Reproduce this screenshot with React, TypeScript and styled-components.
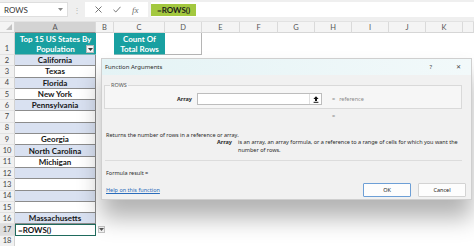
import React from 'react';
import styled, { createGlobalStyle } from 'styled-components';

const GlobalStyle = createGlobalStyle`
  html, body { margin: 0; padding: 0; background: #fff; }
  body { overflow: hidden; }
`;

const Page = styled.div`
  position: relative;
  width: 474px;
  height: 246px;
  overflow: hidden;
  background: #fff;
  font-family: Lato, "Liberation Sans", sans-serif;
`;

/* ---------- formula bar ---------- */

const TopBar = styled.div`
  display: flex;
  align-items: flex-start;
  height: 22px;
  padding-top: 2px;
  box-sizing: border-box;
  background: #efefef;
  border-bottom: 1px solid #e2e2e2;
`;

const NameBox = styled.div`
  width: 68px;
  height: 15px;
  box-sizing: border-box;
  display: flex;
  align-items: center;
  justify-content: space-between;
  padding: 0 4px 0 4px;
  background: #fff;
  border: 1px solid #dedede;
  border-left: none;
  font-size: 8px;
  color: #333;
`;

const Dots = styled.div`
  width: 17px;
  height: 15px;
  display: flex;
  align-items: center;
  justify-content: center;
  color: #b5b5b5;
  font-size: 8px;
`;

const IconBox = styled.div`
  width: 63px;
  height: 15px;
  display: flex;
  align-items: center;
  justify-content: space-around;
  padding: 0 4px;
  box-sizing: border-box;
  background: #fff;
`;

const FxGlyph = styled.span`
  font-family: "Liberation Serif", serif;
  font-style: italic;
  font-size: 9px;
  color: #6c6c6c;
`;

const FormulaField = styled.div`
  flex: 1;
  height: 15px;
  margin-left: 3px;
  background: #fff;
  display: flex;
  align-items: center;
`;

const Highlight = styled.span`
  display: flex;
  align-items: center;
  height: 12px;
  padding: 0 6px 0 6px;
  background: #a3c83f;
  color: #1d1d1d;
  font-size: 8px;
  font-weight: 700;
`;

/* ---------- sheet ---------- */

const Sheet = styled.div`
  display: grid;
  grid-template-columns: 15px 81px 18px 51px 37px 38px 38px 37px 37px 37px 37px 37px 1fr;
  grid-template-rows: 11px 22px repeat(17, 11.3px);
`;

const Corner = styled.div`
  background: #f4f4f4;
  border-right: 1px solid #d6d6d6;
  border-bottom: 1px solid #d6d6d6;
  display: flex;
  align-items: flex-end;
  justify-content: flex-end;
  padding: 0 2px 2px 0;
`;

const ColHead = styled.div<{ $selected?: boolean }>`
  background: ${({ $selected }) => ($selected ? '#d3d3d3' : '#f4f4f4')};
  border-right: 1px solid #dadada;
  border-bottom: 1px solid ${({ $selected }) => ($selected ? '#8a8a8a' : '#d6d6d6')};
  color: #555;
  font-size: 7.5px;
  display: flex;
  align-items: center;
  justify-content: center;
`;

const RowNum = styled.div<{ $selected?: boolean; $tall?: boolean }>`
  background: ${({ $selected }) => ($selected ? '#dedede' : '#f1f1f1')};
  border-right: 1px solid #d2d2d2;
  border-bottom: 1px solid #e2e2e2;
  color: #444;
  font-size: 7.5px;
  display: flex;
  align-items: ${({ $tall }) => ($tall ? 'flex-end' : 'center')};
  justify-content: center;
  padding-bottom: ${({ $tall }) => ($tall ? '1px' : '0')};
  box-sizing: border-box;
`;

const TealCell = styled.div`
  position: relative;
  background: #19a0a1;
  color: #fff;
  font-weight: 700;
  font-size: 8px;
  line-height: 10px;
  display: flex;
  align-items: center;
  justify-content: center;
  text-align: center;
  border-bottom: 1px solid #7fb8b8;
`;

const FilterButton = styled.div`
  position: absolute;
  right: 2px;
  bottom: 1px;
  width: 8px;
  height: 8px;
  box-sizing: border-box;
  background: #f4f4f4;
  border: 1px solid #b8b8b8;
  display: flex;
  align-items: center;
  justify-content: center;
`;

const DataCell = styled.div<{ $fill?: boolean }>`
  background: ${({ $fill }) => ($fill ? '#d9e1f1' : '#fff')};
  border-right: 1px solid #8c8c8c;
  border-bottom: 1px solid #8c8c8c;
  box-sizing: border-box;
  color: #161616;
  font-size: 8px;
  font-weight: 700;
  display: flex;
  align-items: center;
  justify-content: center;
`;

const ActiveCell = styled.div`
  position: relative;
  border: 1.5px solid #1f6b5d;
  box-sizing: border-box;
  color: #111;
  font-size: 8px;
  font-weight: 700;
  display: flex;
  align-items: center;
  padding-left: 2px;
`;

const EdgeCell = styled.div<{ $right?: boolean; $bottom?: boolean }>`
  border-right: ${({ $right }) => ($right ? '1px solid #b5b5b5' : 'none')};
  border-bottom: ${({ $bottom }) => ($bottom ? '1px solid #b5b5b5' : 'none')};
`;

const Empty = styled.div``;

const AutoButton = styled.div`
  width: 7px;
  height: 7px;
  margin: 2px 0 0 2px;
  box-sizing: border-box;
  background: #f4f4f4;
  border: 1px solid #c4c4c4;
  display: flex;
  align-items: center;
  justify-content: center;
`;

/* ---------- dialog ---------- */

const Dialog = styled.div`
  position: absolute;
  left: 101px;
  top: 58px;
  width: 371px;
  height: 142px;
  box-sizing: border-box;
  background: #f1f1f1;
  border: 1px solid #cfcfcf;
  box-shadow: 0 18px 22px 0 rgba(0, 0, 0, 0.3);
  font-family: "Noto Sans", "Open Sans", sans-serif;
  color: #2b2b2b;
  display: flex;
  flex-direction: column;
`;

const TitleBar = styled.div`
  height: 16px;
  flex-shrink: 0;
  display: flex;
  align-items: center;
  justify-content: space-between;
  padding: 0 10px 0 3px;
  background: linear-gradient(90deg, #e4f3f5, #f2f9fa);
  font-size: 6px;
`;

const TitleButtons = styled.div`
  display: flex;
  align-items: center;
  gap: 24px;
  font-size: 6px;
  color: #444;
`;

const Body = styled.div`
  flex: 1;
  display: flex;
  flex-direction: column;
  padding: 0 5px 3px 2px;
  font-size: 5.5px;
`;

const GroupBox = styled.fieldset`
  margin: 6px 4px 0 0;
  padding: 4px 0 3px 0;
  min-width: 0;
  border: 1px solid #d9d9d9;
  background: #f6f6f6;
`;

const Legend = styled.legend`
  margin-left: 5px;
  padding: 0 1px;
  line-height: 8px;
  font-size: 5.5px;
  color: #555;
`;

const ArgRow = styled.div`
  display: grid;
  grid-template-columns: 87px 125px auto;
  column-gap: 5px;
  align-items: center;
  height: 12px;
`;

const ArgLabel = styled.div`
  text-align: right;
  font-weight: 700;
`;

const ArgInput = styled.div`
  height: 12px;
  box-sizing: border-box;
  background: #fff;
  border: 1px solid #bdbdbd;
  display: flex;
  justify-content: flex-end;
`;

const RefButton = styled.div`
  width: 11px;
  height: 10px;
  display: flex;
  align-items: center;
  justify-content: center;
  border-left: 1px solid #e0e0e0;
`;

const ArgValue = styled.div`
  padding-left: 5px;
  color: #8a8a8a;
  display: flex;
  gap: 4px;
`;

const EqRow = styled(ArgRow)`
  margin: 1px 0 0 1px;
`;

const Description = styled.div`
  margin: 9.5px 0 0 2px;
  line-height: 7.5px;
`;

const ArgHelp = styled.div`
  display: grid;
  grid-template-columns: 128px 1fr;
  column-gap: 6px;
  line-height: 7.5px;
`;

const ArgHelpLabel = styled.div`
  text-align: right;
  font-weight: 700;
`;

const Divider = styled.div`
  height: 1px;
  flex-shrink: 0;
  margin: 6px 4px 0 1px;
  background: #dcdcdc;
`;

const ResultRow = styled.div`
  margin: 8px 0 0 2px;
  line-height: 8px;
`;

const Footer = styled.div`
  margin-top: 6px;
  display: flex;
  align-items: center;
  justify-content: space-between;
`;

const HelpLink = styled.a`
  margin-left: 2px;
  color: #2a6cbb;
  text-decoration: underline;
`;

const ButtonRow = styled.div`
  display: flex;
  gap: 7px;
`;

const DialogButton = styled.button<{ $primary?: boolean }>`
  width: 48px;
  height: 14px;
  padding: 0;
  box-sizing: border-box;
  font-family: inherit;
  font-size: 5.5px;
  color: #222;
  background: #fdfdfd;
  border: 1px solid ${({ $primary }) => ($primary ? '#6d9fd6' : '#d3d3d3')};
  border-radius: 1px;
`;

/* ---------- icons ---------- */

const Caret = ({ color = '#777' }: { color?: string }) => (
  <svg width="5" height="3" viewBox="0 0 5 3">
    <path d="M0 0 L5 0 L2.5 3 Z" fill={color} />
  </svg>
);

const CrossIcon = () => (
  <svg width="7" height="7" viewBox="0 0 7 7">
    <path d="M0.5 0.5 L6.5 6.5 M6.5 0.5 L0.5 6.5" stroke="#666" strokeWidth="0.9" />
  </svg>
);

const CheckIcon = () => (
  <svg width="8" height="7" viewBox="0 0 8 7">
    <path d="M0.5 3.8 L2.8 6 L7.5 0.8" stroke="#666" strokeWidth="0.9" fill="none" />
  </svg>
);

const RefIcon = () => (
  <svg width="6" height="7" viewBox="0 0 6 7">
    <path d="M3 0.3 L5.6 3 L4 3 L4 5 L2 5 L2 3 L0.4 3 Z" fill="#111" />
    <rect x="0.6" y="5.8" width="4.8" height="1" fill="#111" />
  </svg>
);

const CornerTriangle = () => (
  <svg width="6" height="6" viewBox="0 0 6 6">
    <path d="M6 0 L6 6 L0 6 Z" fill="#c3c3c3" />
  </svg>
);

const COLS = ['A', 'B', 'C', 'D', 'E', 'F', 'G', 'H', 'I', 'J', 'K', ''];

const STATES = [
  'California', 'Texas', 'Florida', 'New York', 'Pennsylvania', '', '', 'Georgia',
  'North Carolina', 'Michigan', '', '', '', '', 'Massachusetts',
];

function restOfRow(row: number) {
  return COLS.slice(1).map((c, i) => <Empty key={row + '-' + i} />);
}

export default function App() {
  return (
    <Page>
      <GlobalStyle />
      <TopBar>
        <NameBox>
          ROWS
          <Caret color="#8a8a8a" />
        </NameBox>
        <Dots>⋮</Dots>
        <IconBox>
          <CrossIcon />
          <CheckIcon />
          <FxGlyph>fx</FxGlyph>
        </IconBox>
        <FormulaField>
          <Highlight>=ROWS()</Highlight>
        </FormulaField>
      </TopBar>

      <Sheet>
        <Corner>
          <CornerTriangle />
        </Corner>
        {COLS.map((c, i) => (
          <ColHead key={'h' + i} $selected={c === 'A'}>{c}</ColHead>
        ))}

        <RowNum $tall>1</RowNum>
        <TealCell>
          Top 15 US States By
          <br />
          Population
          <FilterButton>
            <Caret color="#333" />
          </FilterButton>
        </TealCell>
        <Empty />
        <TealCell>
          Count Of
          <br />
          Total Rows
        </TealCell>
        <EdgeCell $right $bottom />
        {COLS.slice(4).map((c, i) => <Empty key={'r1-' + i} />)}

        {STATES.map((name, i) => (
          <React.Fragment key={'row' + i}>
            <RowNum>{i + 2}</RowNum>
            <DataCell $fill={i % 2 === 0}>{name}</DataCell>
            {restOfRow(i + 2)}
          </React.Fragment>
        ))}

        <RowNum $selected>17</RowNum>
        <ActiveCell>=ROWS()</ActiveCell>
        <Empty>
          <AutoButton>
            <Caret color="#555" />
          </AutoButton>
        </Empty>
        {COLS.slice(2).map((c, i) => <Empty key={'r17-' + i} />)}

        <RowNum>18</RowNum>
        <Empty />
        {restOfRow(18)}
      </Sheet>

      <Dialog>
        <TitleBar>
          <span>Function Arguments</span>
          <TitleButtons>
            <span>?</span>
            <span>✕</span>
          </TitleButtons>
        </TitleBar>
        <Body>
          <GroupBox>
            <Legend>ROWS</Legend>
            <ArgRow>
              <ArgLabel>Array</ArgLabel>
              <ArgInput>
                <RefButton>
                  <RefIcon />
                </RefButton>
              </ArgInput>
              <ArgValue>
                <span>=</span>
                <span>reference</span>
              </ArgValue>
            </ArgRow>
          </GroupBox>
          <EqRow>
            <span />
            <span />
            <ArgValue>=</ArgValue>
          </EqRow>
          <Description>Returns the number of rows in a reference or array.</Description>
          <ArgHelp>
            <ArgHelpLabel>Array</ArgHelpLabel>
            <div>
              is an array, an array formula, or a reference to a range of cells for which you want the
              <br />
              number of rows.
            </div>
          </ArgHelp>
          <Divider />
          <ResultRow>Formula result =</ResultRow>
          <Footer>
            <HelpLink>Help on this function</HelpLink>
            <ButtonRow>
              <DialogButton $primary>OK</DialogButton>
              <DialogButton>Cancel</DialogButton>
            </ButtonRow>
          </Footer>
        </Body>
      </Dialog>
    </Page>
  );
}
